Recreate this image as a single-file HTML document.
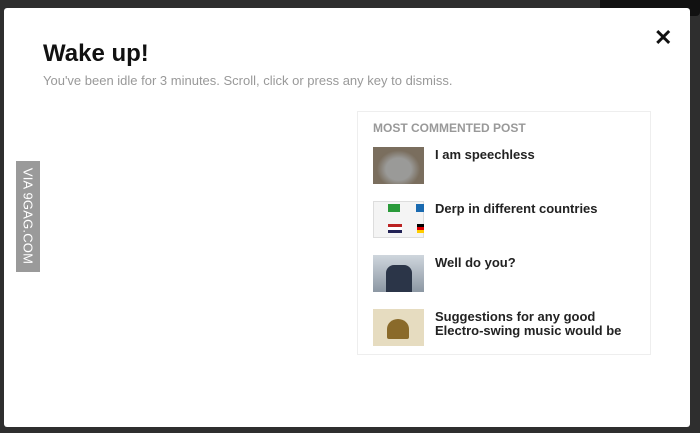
<!DOCTYPE html>
<html><head><style>
body{margin:0;width:700px;height:433px;background:#2e2e2e;position:relative;overflow:hidden;font-family:"Liberation Sans",Arial,sans-serif}
.bgt{position:absolute;color:#555;font-size:13px}
.modal{position:absolute;left:4px;top:8px;width:686px;height:419px;background:#fff;border-radius:3px}
h1{position:absolute;left:39px;top:32px;margin:0;font-size:24px;font-weight:bold;color:#111}
.sub{position:absolute;left:39px;top:65px;font-size:13px;color:#999}
.x{position:absolute;left:650px;top:17px;font-size:22px;font-weight:bold;color:#111}
.via{position:absolute;width:24px;height:111px;background:#9a9a9a}
.via span{position:absolute;left:12px;top:55px;transform:translate(-50%,-50%) rotate(90deg);color:#fff;font-size:13px;white-space:nowrap;letter-spacing:0.2px}
.box{position:absolute;left:353px;top:103px;width:292px;height:242px;border:1px solid #eee}
.hd{position:absolute;left:15px;top:9px;font-size:12px;font-weight:bold;color:#999}
.it{position:absolute;left:15px;width:51px;height:37px}
.t{position:absolute;left:77px;font-size:13px;font-weight:bold;color:#222;line-height:14px}
</style></head><body>
<div class="bgt" style="left:600px;top:-4px;width:100px;height:20px;background:#111;border-radius:4px"></div>
<div class="modal">
<h1>Wake up!</h1>
<div class="sub">You've been idle for 3 minutes. Scroll, click or press any key to dismiss.</div>
<div class="x">✕</div>
<div class="via" style="left:12px;top:153px"><span>VIA 9GAG.COM</span></div>
<div class="box">
<div class="hd">MOST COMMENTED POST</div>
<div class="it" style="top:35px;background:radial-gradient(ellipse at 50% 60%,#9a9a98 0 35%,#7a6e5e 60%)"></div>
<div class="t" style="top:36px">I am speechless</div>
<div class="it" style="top:89px;background:#f4f4f4;border:1px solid #ddd;box-sizing:border-box"><div style="position:absolute;left:14px;top:2px;width:12px;height:8px;background:#2a9a3a"></div><div style="position:absolute;left:42px;top:2px;width:8px;height:8px;background:#1a6ab0"></div><div style="position:absolute;left:14px;top:22px;width:14px;height:9px;background:linear-gradient(#b22 33%,#fff 33% 66%,#225 66%)"></div><div style="position:absolute;left:43px;top:22px;width:7px;height:9px;background:linear-gradient(#000 33%,#d00 33% 66%,#fc0 66%)"></div></div>
<div class="t" style="top:90px">Derp in different countries</div>
<div class="it" style="top:143px;background:linear-gradient(#cfd6dd,#8c97a3)"><div style="position:absolute;left:13px;top:10px;width:26px;height:27px;background:#2b3548;border-radius:8px 8px 0 0"></div></div>
<div class="t" style="top:144px">Well do you?</div>
<div class="it" style="top:197px;background:#e6dcc0"><div style="position:absolute;left:14px;top:10px;width:22px;height:20px;background:#8a6a2a;border-radius:50% 50% 2px 2px"></div></div>
<div class="t" style="top:198px">Suggestions for any good<br>Electro-swing music would be</div>
</div>
</div>
</body></html>
